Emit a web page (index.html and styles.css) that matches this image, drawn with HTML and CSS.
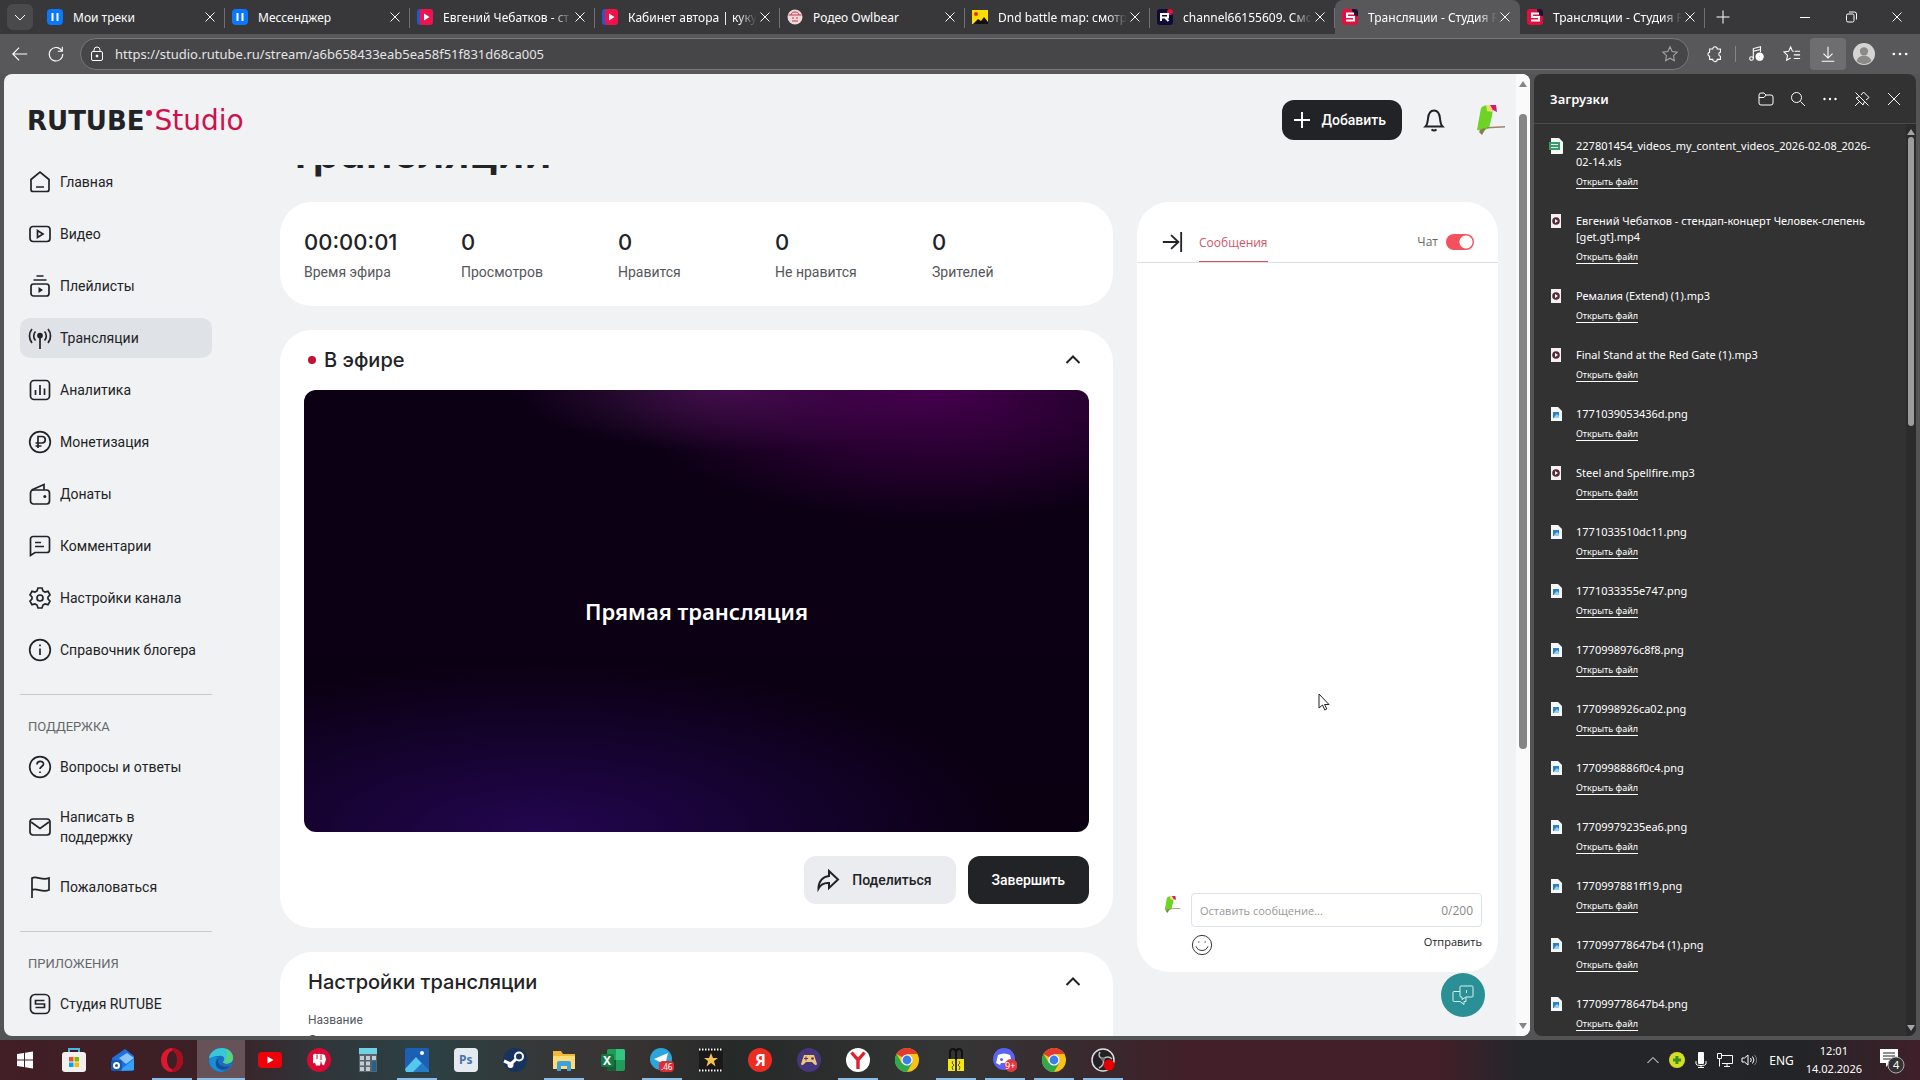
FILE: index.html
```html
<!DOCTYPE html>
<html lang="ru">
<head>
  <meta charset="UTF-8" />
  <meta name="viewport" content="width=device-width, initial-scale=1.0"/>
  <title>Трансляции - Студия RUTUBE</title>
  <link rel="stylesheet" href="styles.css">
</head>
<body>

<!-- shared icons -->
<svg class="sprite" aria-hidden="true">
  <symbol id="x" viewBox="0 0 16 16"><path d="M3.500 3.500l9 9M12.500 3.500l-9 9"/></symbol>
  <symbol id="dots" viewBox="0 0 16 16"><g fill="currentColor" stroke="none"><circle cx="2.500" cy="8" r="1.200"/><circle cx="8" cy="8" r="1.200"/><circle cx="13.500" cy="8" r="1.200"/></g></symbol>
  <symbol id="chev" viewBox="0 0 24 24"><path d="M5.500 15l6.500-6.500 6.500 6.500"/></symbol>
  <symbol id="track" viewBox="0 0 16 16"><rect width="16" height="16" rx="4" fill="#0a77ff" stroke="none"/><path d="M5.500 4v8M10.500 4v8" stroke="#fff" stroke-width="2"/></symbol>
  <symbol id="play" viewBox="0 0 16 16"><rect width="12" height="16" rx="3" fill="#2a55c8" stroke="none"/><rect x="3" width="13" height="16" rx="3" fill="#f0124d" stroke="none"/><path d="M7 4.500v7l5.500-3.500z" fill="#fff" stroke="none"/></symbol>
  <symbol id="studio" viewBox="0 0 16 16"><rect width="16" height="16" rx="3" fill="#e0103f" stroke="none"/><path d="M10 0h3a3 3 0 0 1 3 3v4c-4 0-6-3-6-7z" fill="#1a1230" stroke="none"/><path d="M12 4.500H5v3.500h7v3.500H4" stroke="#fff" stroke-width="2" fill="none"/></symbol>
  <symbol id="chrome" viewBox="0 0 24 24"><g stroke="none"><circle cx="12" cy="12" r="12" fill="#fbc116"/><path d="M12 12L1.600 6A12 12 0 0 1 22.400 6H12z" fill="#e33b2e"/><path d="M1.600 6A12 12 0 0 0 12 24l5.200-9L12 12 6.800 15z" fill="#2da94f"/><circle cx="12" cy="12" r="5.600" fill="#fff"/><circle cx="12" cy="12" r="4.400" fill="#3b7ded"/></g></symbol>
  <symbol id="parrot" viewBox="0 0 32 30"><g stroke="none"><path d="M7 3Q9 0 16 0l3 3-1 8-3 12-6 3-6-1z" fill="#6bd425"/><path d="M7 24l5-1-4 7-3-3z" fill="#8a7a55"/><path d="M12 0h5l2 7-6-1z" fill="#f0dc6a"/><path d="M16 0h6l1 7-4-2z" fill="#d8147c"/><path d="M13 22l18-1v1.500l-18 1z" fill="#9c8266"/></g></symbol>
  <symbol id="xls" viewBox="0 0 14 16"><g stroke="none"><path d="M2 0h8l4 4v11a1 1 0 0 1-1 1H2z" fill="#f4fbf6"/><rect y="4" width="11" height="8" fill="#3b9a6b"/><path d="M2 6.500h7M2 9.500h7" stroke="#dff3e8"/></g></symbol>
  <symbol id="media" viewBox="0 0 14 16"><g stroke="none"><path d="M2 1h10v14H2z" fill="#f6f0f2"/><circle cx="7" cy="8" r="3.800" fill="#542b38"/><path d="M6 6v4l3-2z" fill="#fff"/></g></symbol>
  <symbol id="png" viewBox="0 0 14 16"><g stroke="none"><path d="M2 1h7l4 4v10H2z" fill="#f4f7fb"/><path d="M4 6h6v6H4z" fill="#2a7fd0"/><path d="M5 11l3-3 2 2v2H5z" fill="#8fd0f5"/></g></symbol>
</svg>

<div class="tabs">
  <button class="tab-menu" aria-label="Вкладки"><svg viewBox="0 0 16 16"><path d="M3 6l5 5 5-5"/></svg></button>
  <div class="tab"><svg class="fav"><use href="#track"/></svg><a href="#">Мои треки</a><button aria-label="Закрыть"><svg><use href="#x"/></svg></button></div>
  <div class="tab"><svg class="fav"><use href="#track"/></svg><a href="#">Мессенджер</a><button aria-label="Закрыть"><svg><use href="#x"/></svg></button></div>
  <div class="tab"><svg class="fav"><use href="#play"/></svg><a class="long" href="#">Евгений Чебатков - ст</a><button aria-label="Закрыть"><svg><use href="#x"/></svg></button></div>
  <div class="tab"><svg class="fav"><use href="#play"/></svg><a class="long" href="#">Кабинет автора | куку</a><button aria-label="Закрыть"><svg><use href="#x"/></svg></button></div>
  <div class="tab"><svg class="fav" viewBox="0 0 16 16"><circle cx="8" cy="8" r="7.500" fill="#f3d6d8" stroke="none"/><path d="M1.500 6h13M4 6c0-4 8-4 8 0M5 9h2M9 9h2M5 12h6" stroke="#b4434f" fill="none"/></svg><a href="#">Родео Owlbear</a><button aria-label="Закрыть"><svg><use href="#x"/></svg></button></div>
  <div class="tab"><svg class="fav" viewBox="0 0 16 16"><rect y="1" width="16" height="14" fill="#ffdd00" stroke="none"/><circle cx="4" cy="5" r="2" fill="#e8321e" stroke="none"/><path d="M1 15l5-5 3 2 3-4 4 5v2z" fill="#111" stroke="none"/></svg><a class="long" href="#">Dnd battle map: смотр</a><button aria-label="Закрыть"><svg><use href="#x"/></svg></button></div>
  <div class="tab"><svg class="fav" viewBox="0 0 16 16"><rect width="16" height="16" rx="3" fill="#0d0b3c" stroke="none"/><circle cx="13" cy="3" r="3" fill="#e8103f" stroke="none"/><path d="M4 12V5h7v3.500H4M8.500 9l3 3" stroke="#fff" stroke-width="2" fill="none"/></svg><a class="long" href="#">channel66155609. Смо</a><button aria-label="Закрыть"><svg><use href="#x"/></svg></button></div>
  <div class="tab active"><svg class="fav"><use href="#studio"/></svg><a class="long" href="#">Трансляции - Студия R</a><button aria-label="Закрыть"><svg><use href="#x"/></svg></button></div>
  <div class="tab"><svg class="fav"><use href="#studio"/></svg><a class="long" href="#">Трансляции - Студия R</a><button aria-label="Закрыть"><svg><use href="#x"/></svg></button></div>
  <button class="new-tab" aria-label="Новая вкладка"><svg viewBox="0 0 16 16"><path d="M8 1.500v13M1.500 8h13"/></svg></button>
  <div class="window-buttons">
    <button aria-label="Свернуть"><svg viewBox="0 0 16 16"><path d="M3 8.500h10"/></svg></button>
    <button aria-label="Развернуть"><svg viewBox="0 0 16 16"><rect x="3.500" y="5" width="7.500" height="8" rx="1.500"/><path d="M6 3h5.500a2 2 0 0 1 2 2v5.500"/></svg></button>
    <button aria-label="Закрыть окно"><svg><use href="#x"/></svg></button>
  </div>
</div>

<div class="toolbar">
  <button aria-label="Назад"><svg viewBox="0 0 20 20"><path d="M18 10H2M9 3l-7 7 7 7"/></svg></button>
  <button aria-label="Обновить"><svg viewBox="0 0 20 20"><path d="M16.500 6.500A7.500 7.500 0 1 0 17.500 10M17 2v5h-5"/></svg></button>
  <div class="address">
    <svg viewBox="0 0 16 16"><rect x="2.500" y="5.500" width="11" height="9" rx="1.500"/><path d="M5 5.500V4a3 3 0 0 1 6 0v1.500"/><circle cx="8" cy="10" r="1" fill="currentColor"/></svg>
    <input type="text" aria-label="Адрес" value="https://studio.rutube.ru/stream/a6b658433eab5ea58f51f831d68ca005">
    <button aria-label="В избранное"><svg class="dim" viewBox="0 0 20 20"><path d="M10 2l2.400 5.200 5.600.7-4.100 3.900 1 5.600L10 14.700l-4.900 2.700 1-5.600L2 7.900l5.600-.7z"/></svg></button>
  </div>
  <div class="tools">
    <button aria-label="Расширения"><svg viewBox="0 0 20 20"><path d="M4 4.500h3.500a2.500 2.500 0 0 1 5 0H16V8a2.300 2.300 0 0 0 0 4.500V16h-3.500a2.500 2.500 0 0 1-5 0H4v-3.500A2.300 2.300 0 0 1 4 8z"/></svg></button>
    <span class="sep"></span>
    <button aria-label="Музыка"><svg viewBox="0 0 20 20"><path d="M7 15V4l8-2v6M7 7l8-2"/><circle cx="5" cy="15" r="2"/><circle cx="14" cy="13" r="4" fill="currentColor"/><circle cx="14" cy="13" r="1" fill="#58585b"/></svg></button>
    <button aria-label="Избранное"><svg viewBox="0 0 20 20"><path d="M12 7l-1.600-.2L8.500 2 6.300 7 1 7.700l4 3.800-1 5.500 4.500-2.500M13 7h6M12 11h7M12 15h7"/></svg></button>
    <button class="on" aria-label="Загрузки"><svg viewBox="0 0 20 20"><path d="M10 2v12M5 9.500l5 5 5-5M3 18h14"/></svg></button>
    <button aria-label="Профиль"><svg class="face" viewBox="0 0 24 24"><circle cx="12" cy="12" r="12" fill="#d6d4d2" stroke="none"/><circle cx="12" cy="9" r="4.500" fill="#8c8a88" stroke="none"/><path d="M4 20c1-8 15-8 16 0a12 12 0 0 1-16 0z" fill="#8c8a88" stroke="none"/></svg></button>
    <button aria-label="Ещё"><svg><use href="#dots"/></svg></button>
  </div>
</div>

<div class="work">
  <div class="page">
    <div class="site">
      <header>
        <a class="logo" href="#"><b>RUTUBE</b><i></i><span>Studio</span></a>
        <div class="header-actions">
          <button class="btn dark add"><svg viewBox="0 0 16 16"><path d="M8 0v16M0 8h16"/></svg>Добавить</button>
          <button aria-label="Уведомления"><svg class="bell" viewBox="0 0 24 24"><path d="M3.500 18.500h17c-2-2-2-4-2.500-8-.5-5-3-8-6-8s-5.500 3-6 8c-.5 4-.5 6-2.500 8z"/><path d="M9.500 21.500q2.500 2 5 0"/></svg></button>
          <button aria-label="Профиль"><svg class="me"><use href="#parrot"/></svg></button>
        </div>
      </header>

      <div class="columns">
        <nav class="side">
          <a href="#"><svg viewBox="0 0 24 24"><path d="M3 9.500L12 2l9 7.500v10a2 2 0 0 1-2 2H5a2 2 0 0 1-2-2zM8 17h8"/></svg>Главная</a>
          <a href="#"><svg viewBox="0 0 24 24"><rect x="2" y="4.500" width="20" height="15" rx="3"/><path d="M9.500 8.500v7l5.500-3.500z"/></svg>Видео</a>
          <a href="#"><svg viewBox="0 0 24 24"><rect x="3" y="10" width="18" height="12" rx="2.500"/><path d="M5.500 6h13M8.500 2h7"/><path d="M10.500 13v6l4.500-3z" fill="currentColor" stroke="none"/></svg>Плейлисты</a>
          <a class="current" href="#"><svg viewBox="0 0 24 24"><path d="M12 10v13M7.500 5.500a6.500 6.500 0 0 0 0 9M16.500 5.500a6.500 6.500 0 0 1 0 9M4 3a11 11 0 0 0 0 14M20 3a11 11 0 0 1 0 14"/><circle cx="12" cy="9.500" r="2" fill="currentColor"/></svg>Трансляции</a>
          <a href="#"><svg viewBox="0 0 24 24"><rect x="2.500" y="2.500" width="19" height="19" rx="3.500"/><path d="M7.500 12v5M12 7v10M16.500 10.500V17"/></svg>Аналитика</a>
          <a href="#"><svg viewBox="0 0 24 24"><circle cx="12" cy="12" r="10.300"/><path d="M10 18V6.500h4a3 3 0 0 1 0 6.500H7.500M7.500 16h6"/></svg>Монетизация</a>
          <a href="#"><svg viewBox="0 0 24 24"><rect x="2.500" y="8" width="19" height="14" rx="3"/><path d="M3.500 8L16 2.500V8"/><circle cx="16.800" cy="14.500" r="1.500" fill="currentColor" stroke="none"/></svg>Донаты</a>
          <a href="#"><svg viewBox="0 0 24 24"><path d="M2.500 21.500V5a2.500 2.500 0 0 1 2.500-2.500h14A2.500 2.500 0 0 1 21.500 5v11a2.500 2.500 0 0 1-2.500 2.500H7zM7 8.500h6M7 12.500h9"/></svg>Комментарии</a>
          <a href="#"><svg viewBox="0 0 24 24"><path d="M10 2h4l1 3 2 1 3-.7 2 3.500L20 11v2l2 2.200-2 3.500-3-.7-2 1-1 3h-4l-1-3-2-1-3 .7-2-3.500L4 13v-2L2 8.800l2-3.500L7 6l2-1z"/><circle cx="12" cy="12" r="3"/></svg>Настройки канала</a>
          <a href="#"><svg viewBox="0 0 24 24"><circle cx="12" cy="12" r="10.300"/><path d="M12 10.500V17M12 6.500v1.800"/></svg>Справочник блогера</a>
          <hr>
          <h4>ПОДДЕРЖКА</h4>
          <a href="#"><svg viewBox="0 0 24 24"><circle cx="12" cy="12" r="10.300"/><path d="M9 9.500c0-4 6.500-4 6.500-.5 0 2.500-3.500 2.500-3.500 5M12 16.500v1.500"/></svg>Вопросы и ответы</a>
          <a class="tall" href="#"><svg viewBox="0 0 24 24"><rect x="2" y="4" width="20" height="16" rx="3"/><path d="M3 7l9 6.500L21 7"/></svg><span>Написать в поддержку</span></a>
          <a href="#"><svg viewBox="0 0 24 24"><path d="M4 23V3c5-2.500 10 3 17 0v12c-7 3-12-2.500-17 0"/></svg>Пожаловаться</a>
          <hr>
          <h4>ПРИЛОЖЕНИЯ</h4>
          <a href="#"><svg viewBox="0 0 24 24"><rect x="2.500" y="2.500" width="19" height="19" rx="4.500"/><path d="M16.500 8.500h-9V12h9v3.500h-9"/></svg>Студия RUTUBE</a>
        </nav>

        <main>
          <h1>Трансляции</h1>
          <div class="boards">
            <div class="left">
              <section class="card stats">
                <div><b>00:00:01</b><span>Время эфира</span></div>
                <div><b>0</b><span>Просмотров</span></div>
                <div><b>0</b><span>Нравится</span></div>
                <div><b>0</b><span>Не нравится</span></div>
                <div><b>0</b><span>Зрителей</span></div>
              </section>

              <section class="card live">
                <div class="card-head">
                  <h2><i></i>В эфире</h2>
                  <button aria-label="Свернуть"><svg><use href="#chev"/></svg></button>
                </div>
                <div class="player">Прямая трансляция</div>
                <div class="card-actions">
                  <button class="btn light"><svg viewBox="0 0 24 24"><path d="M13 3l9 8.500-9 8.500v-5C8 14.500 5 16 2.500 20.500 2.500 13 7 8.500 13 8z"/></svg>Поделиться</button>
                  <button class="btn dark">Завершить</button>
                </div>
              </section>

              <section class="card settings">
                <div class="card-head">
                  <h2>Настройки трансляции</h2>
                  <button aria-label="Свернуть"><svg><use href="#chev"/></svg></button>
                </div>
                <label for="name">Название</label>
                <input id="name" type="text" value="Стрим">
              </section>
            </div>

            <section class="card chat">
              <div class="chat-head">
                <button aria-label="Скрыть чат"><svg viewBox="0 0 24 24"><path d="M2 12h17M11 4.500l8 7.500-8 7.500M22 1v22"/></svg></button>
                <a href="#">Сообщения</a>
                <label for="chat-on">Чат</label>
                <input id="chat-on" type="checkbox" checked>
              </div>
              <div class="messages"></div>
              <form class="write">
                <svg class="small-me"><use href="#parrot"/></svg>
                <div class="write-body">
                  <div class="field">
                    <input type="text" aria-label="Сообщение" placeholder="Оставить сообщение...">
                    <span>0/200</span>
                  </div>
                  <div class="write-foot">
                    <button type="button" aria-label="Эмодзи"><svg viewBox="0 0 24 24"><circle cx="12" cy="12" r="10.500"/><path d="M5.500 13.500c2 6 11 6 13 0M8.500 8v1.500M15.500 8v1.500"/></svg></button>
                    <button class="send" type="button">Отправить</button>
                  </div>
                </div>
              </form>
            </section>
          </div>
        </main>
      </div>
      <button class="help" aria-label="Помощь"><svg viewBox="0 0 24 24"><path d="M10 3h11a1 1 0 0 1 1 1v9a1 1 0 0 1-1 1h-6l-4 2.500V14H10a1 1 0 0 1-1-1V4a1 1 0 0 1 1-1zM9 8.500H3a1 1 0 0 0-1 1v8a1 1 0 0 0 1 1h6l4 3v-3h2v-4M15.500 7v3"/></svg></button>
    </div>
    <div class="scroll"><span class="up"></span><span class="thumb"></span><span class="down"></span></div>
  </div>

  <aside class="downloads">
    <div class="dl-head">
      <h3>Загрузки</h3>
      <button aria-label="Папка"><svg viewBox="0 0 16 16"><path d="M1 4a2 2 0 0 1 2-2h3l2 2h5a2 2 0 0 1 2 2v6a2 2 0 0 1-2 2H3a2 2 0 0 1-2-2zM1 6.500h5L8 4"/></svg></button>
      <button aria-label="Поиск"><svg viewBox="0 0 16 16"><circle cx="6.500" cy="6.500" r="5"/><path d="M10.500 10.500L15 15"/></svg></button>
      <button aria-label="Ещё"><svg><use href="#dots"/></svg></button>
      <button aria-label="Открепить"><svg viewBox="0 0 16 16"><path d="M1.500 1.500l13 13M5.500 5.500L2 7l7 7 1.500-3.500M7 4l2.500-3L15 6.500 12 9M5 11l-4 4"/></svg></button>
      <button aria-label="Закрыть"><svg viewBox="0 0 16 16"><path d="M2 2l12 12M14 2L2 14"/></svg></button>
    </div>
    <div class="dl-body">
      <ul>
        <li><svg><use href="#xls"/></svg><div><p>227801454_videos_my_content_videos_2026-02-08_2026-02-14.xls</p><a href="#">Открыть файл</a></div></li>
        <li><svg><use href="#media"/></svg><div><p>Евгений Чебатков - стендап-концерт Человек-слепень [get.gt].mp4</p><a href="#">Открыть файл</a></div></li>
        <li><svg><use href="#media"/></svg><div><p>Ремалия (Extend) (1).mp3</p><a href="#">Открыть файл</a></div></li>
        <li><svg><use href="#media"/></svg><div><p>Final Stand at the Red Gate (1).mp3</p><a href="#">Открыть файл</a></div></li>
        <li><svg><use href="#png"/></svg><div><p>1771039053436d.png</p><a href="#">Открыть файл</a></div></li>
        <li><svg><use href="#media"/></svg><div><p>Steel and Spellfire.mp3</p><a href="#">Открыть файл</a></div></li>
        <li><svg><use href="#png"/></svg><div><p>1771033510dc11.png</p><a href="#">Открыть файл</a></div></li>
        <li><svg><use href="#png"/></svg><div><p>1771033355e747.png</p><a href="#">Открыть файл</a></div></li>
        <li><svg><use href="#png"/></svg><div><p>1770998976c8f8.png</p><a href="#">Открыть файл</a></div></li>
        <li><svg><use href="#png"/></svg><div><p>1770998926ca02.png</p><a href="#">Открыть файл</a></div></li>
        <li><svg><use href="#png"/></svg><div><p>1770998886f0c4.png</p><a href="#">Открыть файл</a></div></li>
        <li><svg><use href="#png"/></svg><div><p>17709979235ea6.png</p><a href="#">Открыть файл</a></div></li>
        <li><svg><use href="#png"/></svg><div><p>1770997881ff19.png</p><a href="#">Открыть файл</a></div></li>
        <li><svg><use href="#png"/></svg><div><p>177099778647b4 (1).png</p><a href="#">Открыть файл</a></div></li>
        <li><svg><use href="#png"/></svg><div><p>177099778647b4.png</p><a href="#">Открыть файл</a></div></li>
      </ul>
      <div class="scroll thin"><span class="up"></span><span class="thumb"></span><span class="down"></span></div>
    </div>
  </aside>
</div>

<div class="taskbar">
  <div class="apps">
    <button aria-label="Пуск"><svg viewBox="0 0 24 24"><path d="M4 6l7-1v6.500H4zM12 4.800L20 3.500v8h-8zM4 12.500h7V19l-7-1zM12 12.500h8v8l-8-1.300z" fill="#fff"/></svg></button>
    <button aria-label="Магазин"><svg viewBox="0 0 24 24"><path d="M7 5V1h10v4" fill="none" stroke="#45b8e0" stroke-width="2"/><rect y="4" width="24" height="20" rx="3" fill="#f2f0ef"/><path d="M7 9h4.500v4.500H7z" fill="#f25022"/><path d="M12.500 9H17v4.500h-4.500z" fill="#7fba00"/><path d="M7 14.500h4.500V19H7z" fill="#00a4ef"/><path d="M12.500 14.500H17V19h-4.500z" fill="#ffb900"/></svg></button>
    <button aria-label="Почта"><svg viewBox="0 0 24 24"><path d="M1 10L14 1l9 7v13a2 2 0 0 1-2 2H4a2 2 0 0 1-2-2z" fill="#1f6fe0"/><path d="M8 10l8-5 7 5-8 6z" fill="#8cc4ff"/><path d="M8 23l15-12v11z" fill="#36a2f5"/><rect y="12" width="11" height="11" rx="2" fill="#1359b8"/><circle cx="5.500" cy="17.500" r="2.500" fill="none" stroke="#fff" stroke-width="2"/></svg></button>
    <button class="run" aria-label="Opera"><svg viewBox="0 0 24 24"><ellipse cx="12" cy="12" rx="11" ry="12" fill="#e0182d"/><path d="M12 0a11 12 0 0 1 0 24z" fill="#a70e1e"/><ellipse cx="12" cy="12" rx="5" ry="9" fill="#3d2026"/></svg></button>
    <button class="run now" aria-label="Edge"><svg viewBox="0 0 24 24"><circle cx="12" cy="12" r="12" fill="#1b6ec2"/><path d="M0 11C1-3 24-4 24 10c0 6-8 7-10 4 3-4 0-7-4-6-5 0-9 2-10 3z" fill="#38c6d9"/><path d="M16 1c6 2 8 6 8 9 0 6-8 7-10 4 5-3 5-9 2-13z" fill="#56d67c"/><path d="M9 9c-5 5-2 14 7 14A12 12 0 0 1 0 12c2-3 6-4 9-3z" fill="#1590d8"/><path d="M10 10c-3 5 2 11 11 8-4 6-15 4-14-3 0-2 1-4 3-5z" fill="#164f95"/></svg></button>
    <button aria-label="YouTube"><svg viewBox="0 0 24 24"><rect y="4" width="24" height="16" rx="4" fill="#f00008"/><path d="M9.500 8.500v7l6-3.500z" fill="#fff"/></svg></button>
    <button aria-label="Кулак"><svg viewBox="0 0 24 24"><circle cx="12" cy="12" r="12" fill="#d80a35"/><path d="M6 7q2-2 4-.5 2-1.500 4 0 2.500-1 4 1l1 4-2 6-2-1-1-4-1 5H9l-1-3-2 1z" fill="#fff"/><path d="M10 7v4M14 7v5" stroke="#d80a35"/></svg></button>
    <button aria-label="Калькулятор"><svg viewBox="0 0 24 24"><rect x="3" width="18" height="24" fill="#59646d"/><path d="M3 0h18v6H3z" fill="#6fd3e5"/><path d="M4 8h4v4H4zM10 8h4v4h-4zM16 8h4v4h-4zM4 13.500h4v4H4zM10 13.500h4v4h-4zM4 19h4v4H4zM10 19h4v4h-4z" fill="#c2ccd4"/><path d="M16 13.500h4V23h-4z" fill="#24618f"/></svg></button>
    <button class="run" aria-label="Фото"><svg viewBox="0 0 24 24"><rect width="24" height="24" rx="2" fill="#1c5fb5"/><path d="M0 21L11 9l13 14-2 1H1z" fill="#55c7ee"/><path d="M8 24l9-9 7 7v2z" fill="#257bc6"/><circle cx="17" cy="5" r="2" fill="#fff"/></svg></button>
    <button aria-label="Photoshop"><svg viewBox="0 0 24 24"><rect width="24" height="24" rx="4" fill="#e4eaf0"/><text x="5" y="16" font-size="12" font-weight="bold" fill="#4774ad">Ps</text></svg></button>
    <button aria-label="Steam"><svg viewBox="0 0 24 24"><circle cx="12" cy="12" r="12" fill="#16345e"/><path d="M1 13l7 3 6-6M6 17l4-3" stroke="#fff" stroke-width="3" fill="none"/><circle cx="16" cy="8.500" r="4" fill="#16345e" stroke="#fff" stroke-width="2"/><circle cx="7.500" cy="17" r="3" fill="#fff"/></svg></button>
    <button class="run" aria-label="Проводник"><svg viewBox="0 0 24 24"><path d="M1 3h8l2 3h12v15H1z" fill="#f2b83a"/><path d="M1 8h22v13H1z" fill="#ffdc75"/><path d="M5 23v-8q0-2 2-2h10q2 0 2 2v8h-4v-5H9v5z" fill="#3fa0dc"/></svg></button>
    <button aria-label="Excel"><svg viewBox="0 0 24 24"><rect x="6" y="1" width="18" height="22" rx="2" fill="#1f9d59"/><path d="M15 1h7a2 2 0 0 1 2 2v9h-9z" fill="#33c481"/><path d="M6 12h9v11H8a2 2 0 0 1-2-2z" fill="#155c37"/><rect y="6" width="13" height="13" rx="2" fill="#107c41"/><text x="2" y="17" font-size="12" font-weight="bold" fill="#fff">X</text></svg></button>
    <button class="run" aria-label="Telegram"><svg viewBox="0 0 24 24"><circle cx="11" cy="11" r="11" fill="#2ba5da"/><path d="M4 11l14-6-3 12-5-3z" fill="#fff"/><rect x="9" y="13" width="15" height="11" rx="4" fill="#dd2c33"/><text x="11" y="22" font-size="8" fill="#fff">.46</text></svg></button>
    <button aria-label="Кино"><svg viewBox="0 0 24 24"><rect width="24" height="24" fill="#191919"/><path d="M0 1.500h24M0 22.500h24" stroke="#fff" stroke-width="2" stroke-dasharray="1.500 1.500"/><path d="M12 5l2 5h5l-4 3 1.500 5.500L12 15l-4.500 3.500L9 13l-4-3h5z" fill="#f1c24d"/></svg></button>
    <button aria-label="Яндекс"><svg viewBox="0 0 24 24"><circle cx="12" cy="12" r="12" fill="#ec2b22"/><text x="7" y="18" font-size="16" font-weight="bold" fill="#fff">Я</text></svg></button>
    <button aria-label="Игры"><svg viewBox="0 0 24 24"><circle cx="12" cy="12" r="12" fill="#46367c"/><path d="M7 7h10l3 9q-1 3-5-2H9q-4 5-5 2z" fill="#efc777"/><path d="M7 10.500h4M9 8.500v4" stroke="#46367c"/><circle cx="15.500" cy="10.500" r="1.300" fill="#46367c"/></svg></button>
    <button class="run" aria-label="Яндекс Браузер"><svg viewBox="0 0 24 24"><circle cx="12" cy="12" r="12" fill="#fff"/><path d="M5.500 4.500L12 12v9M18.500 4.500L12 12" fill="none" stroke="#e02130" stroke-width="3.400"/></svg></button>
    <button aria-label="Chrome"><svg><use href="#chrome"/></svg></button>
    <button class="run" aria-label="Замок"><svg viewBox="0 0 24 24"><path d="M6 12V5q0-4 3-4t3 4v7M12 12V5q0-4 3-4t3 4v7" fill="none" stroke="#111" stroke-width="2"/><path d="M4 11h7v12H4zM13 11h7v12h-7z" fill="#f6e70d"/><path d="M9 13l-1 2 2 2-2 2 1 3M15 13l1 2-2 2 2 2-1 3" fill="none" stroke="#5c5608"/></svg></button>
    <button class="run" aria-label="Discord"><svg viewBox="0 0 24 24"><circle cx="11" cy="11" r="11" fill="#5865f2"/><path d="M5 7q6-3 12 0l2 8-4 2-1-2H8l-1 2-4-2z" fill="#fff"/><circle cx="8.500" cy="11.500" r="1.500" fill="#5865f2"/><circle cx="18" cy="17.500" r="6.500" fill="#e03a45"/><text x="12" y="21" font-size="9" fill="#fff">9+</text></svg></button>
    <button class="run" aria-label="Chrome"><svg><use href="#chrome"/></svg></button>
    <button class="run" aria-label="OBS"><svg viewBox="0 0 24 24"><circle cx="12" cy="12" r="11" fill="#232126" stroke="#ddd" stroke-width="1.500"/><path d="M12 11Q6 9 9 4M12 11q5-4 9 0M12 11q2 6-4 9" fill="none" stroke="#bbb" stroke-width="1.500"/><circle cx="12" cy="11" r="2" fill="#77747a"/><circle cx="18" cy="17" r="5.500" fill="#e80000"/></svg></button>
  </div>
  <div class="tray">
    <svg viewBox="0 0 16 16"><path d="M2.500 11L8 5.500l5.500 5.500"/></svg>
    <svg viewBox="0 0 16 16"><circle cx="8" cy="8" r="8" fill="#d5de22" stroke="none"/><path d="M8 4v8M4 8h8" stroke="#3b8f1e" stroke-width="3"/></svg>
    <svg viewBox="0 0 16 16"><rect x="5" width="6" height="12" rx="1" fill="#fff" stroke="none"/><path d="M3 9v3q0 1.500 5 1.500t5-1.500V9M8 13.500v2M5 15.500h6"/></svg>
    <svg viewBox="0 0 16 16"><path d="M5 3.500h10.500v8H5M.5 1.500h4v5h-4zM2.500 6.500v8M10 11.500v3M7 14.500h6"/></svg>
    <svg viewBox="0 0 16 16"><path d="M1 6v4h2.500L7 13V3L3.500 6zM9.500 6q1.500 2 0 4M11.500 4.500q3 3.500 0 7"/><path d="M13.500 3q4.500 5 0 10" opacity=".4"/></svg>
    <span class="lang">ENG</span>
    <time>12:01<br>14.02.2026</time>
    <svg class="notes" viewBox="0 0 28 28"><path d="M2 3h18v14h-8l-4 4v-4H2z" fill="#fff" stroke="none"/><path d="M5 7h12M5 10h12M5 13h8" stroke="#222"/><circle cx="18" cy="19" r="8" fill="#333" stroke="#aaa"/><text x="15" y="23" font-size="11" fill="#fff" stroke="none">4</text></svg>
  </div>
</div>

<svg class="cursor" viewBox="0 0 12 18"><path d="M1 1v14l3.500-3 2.300 5 2-1-2.200-4.500H11z" fill="#fff" stroke="#222"/></svg>

</body>
</html>
```
FILE: styles.css
```css
* {
  box-sizing: border-box;
}

body {
  margin: 0;
  height: 100vh;
  display: flex;
  flex-direction: column;
  overflow: hidden;
  background: #545456;
  color: #222326;
  font-family: "Noto Sans", sans-serif;
  font-size: 12px;
}

button {
  display: flex;
  align-items: center;
  justify-content: center;
  padding: 0;
  border: none;
  background: none;
  color: inherit;
  font: inherit;
}

a {
  color: inherit;
  text-decoration: none;
}

h1, h2, h3, h4, p, ul {
  margin: 0;
  padding: 0;
}

svg {
  flex: none;
  width: 16px;
  height: 16px;
  fill: none;
  stroke: currentColor;
}

.sprite {
  display: none;
}

/* browser tabs */
.tabs {
  display: flex;
  height: 34px;
  padding-left: 7px;
  background: #38383a;
  color: #fff;
}

.tab-menu {
  width: 26px;
  height: 26px;
  margin: 4px 7px 0 0;
  border-radius: 6px;
  background: #4a4a4c;
}

.tab {
  display: flex;
  align-items: center;
  flex: 0 1 185px;
  min-width: 0;
  height: 34px;
  padding: 0 7px;
  background: linear-gradient(#707072, #707072) right 8px / 1px 20px no-repeat;
}

.tab.active {
  background: #58585b;
  border-radius: 8px 8px 0 0;
}

.tab a {
  flex: 1;
  min-width: 0;
  margin-left: 10px;
  overflow: hidden;
  white-space: nowrap;
}

.tab .long {
  -webkit-mask-image: linear-gradient(to right, #000 85%, transparent);
  mask-image: linear-gradient(to right, #000 85%, transparent);
}

.new-tab {
  width: 36px;
}

.window-buttons {
  display: flex;
  margin-left: auto;
}

.window-buttons button {
  width: 46px;
}

/* address row */
.toolbar {
  display: flex;
  align-items: center;
  height: 40px;
  padding: 0 2px;
  background: #58585b;
  color: #fff;
}

.toolbar button {
  width: 36px;
  height: 32px;
}

.toolbar button svg {
  width: 18px;
  height: 18px;
  stroke-width: 1.2;
}

.address {
  display: flex;
  align-items: center;
  flex: 1;
  height: 32px;
  margin-left: 6px;
  padding-left: 8px;
  border: 1px solid #77787a;
  border-radius: 16px;
  background: #464649;
}

.address input {
  flex: 1;
  margin-left: 8px;
  padding: 0 2px;
  border: none;
  background: none;
  color: #e4e4e4;
  font: inherit;
  font-size: 13px;
}

.toolbar .dim {
  color: #a5a5a5;
}

.tools {
  display: flex;
  align-items: center;
  margin-left: 8px;
}

.tools .sep {
  width: 1px;
  height: 16px;
  margin: 0 2px;
  background: #858587;
}

.tools .on {
  border-radius: 4px;
  background: #6e6e70;
}

.toolbar .face {
  width: 22px;
  height: 22px;
}

/* page and side panel */
.work {
  display: flex;
  flex: 1;
  min-height: 0;
  gap: 4px;
  padding: 0 4px 4px;
}

.page {
  display: flex;
  flex: 1;
  min-width: 0;
  overflow: hidden;
  border-radius: 8px;
  background: #f1f2f4;
}

.site {
  position: relative;
  display: flex;
  flex-direction: column;
  flex: 1;
  min-width: 0;
  font-family: Roboto, sans-serif;
  font-size: 14px;
}

header {
  display: flex;
  align-items: center;
  justify-content: space-between;
  flex: none;
  height: 91px;
  padding: 0 10px 0 23px;
}

.logo {
  display: flex;
  align-items: center;
  padding-top: 2px;
  font-family: "DejaVu Sans", sans-serif;
  font-size: 28px;
  line-height: 28px;
  color: #d0104c;
}

.logo b {
  font-size: 26px;
  color: #222326;
}

.logo i {
  width: 6px;
  height: 6px;
  margin: 0 3px 16px 1px;
  border-radius: 50%;
  background: #d0104c;
}

.header-actions {
  display: flex;
  gap: 16px;
  align-items: center;
}

.btn {
  height: 48px;
  padding: 0 24px;
  border-radius: 12px;
  font-weight: 500;
  font-size: 14px;
}

.btn svg {
  stroke-width: 2;
}

.dark {
  background: #222326;
  color: #fff;
}

.light {
  padding: 0 24px 0 12px;
  gap: 12px;
  background: #ebecef;
}

.light svg {
  width: 24px;
  height: 24px;
}

.add {
  height: 40px;
  padding: 0 16px 0 12px;
  gap: 12px;
  margin-right: 4px;
}

.bell {
  width: 24px;
  height: 24px;
  stroke-width: 2;
}

.me {
  width: 32px;
  height: 30px;
  margin-left: 12px;
}

.columns {
  display: flex;
  flex: 1;
  min-height: 0;
  overflow: hidden;
}

/* site menu */
.side {
  flex: none;
  width: 192px;
  margin: -3px 68px 0 16px;
}

.side a {
  display: flex;
  align-items: center;
  height: 40px;
  margin-bottom: 12px;
  padding: 0 8px;
  gap: 8px;
  border-radius: 10px;
  line-height: 20px;
}

.side .tall {
  height: 56px;
}

.side .tall span {
  width: 90px;
}

.side svg {
  width: 24px;
  height: 24px;
  stroke-width: 1.7;
}

.side .current {
  background: #dfe2e6;
}

.side hr {
  margin: 24px 0;
  border: none;
  border-top: 1px solid #c8cacd;
}

.side h4 {
  margin: 0 8px 12px;
  font-size: 13px;
  line-height: 16px;
  font-weight: normal;
  color: #66686c;
}

/* content */
main {
  flex: 1;
  min-width: 0;
  padding-right: 18px;
}

h1 {
  margin: -38px 0 25px;
  padding-left: 6px;
  font-family: Inter, sans-serif;
  font-size: 44px;
  line-height: 50px;
  font-weight: 600;
}

.boards {
  display: flex;
  align-items: flex-start;
  gap: 24px;
}

.left {
  flex: 1;
  min-width: 0;
}

.card {
  margin-bottom: 24px;
  padding: 24px;
  border-radius: 32px;
  background: #fff;
}

.stats {
  display: grid;
  grid-template-columns: repeat(5, 1fr);
}

.stats b {
  display: block;
  margin-bottom: 4px;
  font-family: Inter, sans-serif;
  font-size: 22px;
  line-height: 32px;
  font-weight: 500;
}

.stats span {
  line-height: 20px;
  color: #55575b;
}

.card-head {
  display: flex;
  align-items: center;
  justify-content: space-between;
  height: 28px;
  margin: -8px 4px 16px;
}

h2 {
  display: flex;
  align-items: center;
  gap: 8px;
  font-family: Inter, sans-serif;
  font-size: 20px;
  font-weight: 500;
}

h2 i {
  width: 8px;
  height: 8px;
  border-radius: 50%;
  background: #c8102e;
}

.card-head svg {
  width: 24px;
  height: 24px;
  stroke-width: 2;
}

.player {
  display: flex;
  align-items: center;
  justify-content: center;
  aspect-ratio: 16 / 9;
  border-radius: 12px;
  background:
    radial-gradient(ellipse 40% 30% at 80% 0, #45004d, transparent),
    radial-gradient(ellipse 28% 14% at 55% 0, #40144a, transparent),
    radial-gradient(ellipse 60% 38% at 30% 100%, #22064f, transparent),
    linear-gradient(#0c0015, #0a0012);
  color: #fff;
  font-family: "Noto Sans", sans-serif;
  font-size: 22px;
  font-weight: 600;
}

.card-actions {
  display: flex;
  justify-content: flex-end;
  gap: 12px;
  margin-top: 24px;
}

.settings label,
.settings input {
  display: block;
  margin: 0 4px;
  font-size: 12px;
  line-height: 16px;
  color: #55575b;
}

.settings input {
  margin-top: 4px;
  padding: 0;
  border: none;
}

/* chat */
.chat {
  display: flex;
  flex-direction: column;
  width: 361px;
  height: calc(100vh - 310px);
  padding: 0;
  font-family: "Open Sans", sans-serif;
  font-size: 12px;
}

.chat-head {
  display: flex;
  align-items: flex-end;
  height: 61px;
  padding: 0 24px;
  border-bottom: 1px solid #dcdee2;
}

.chat-head svg {
  width: 22px;
  height: 22px;
  margin-bottom: 9px;
  stroke-width: 2;
}

.chat-head a {
  margin: 0 auto 0 16px;
  height: 28px;
  border-bottom: 1px solid #d25565;
  color: #d25565;
  line-height: 18px;
}

.chat-head label {
  margin: 0 8px 12px 0;
  color: #666;
}

.chat-head input {
  appearance: none;
  width: 28px;
  height: 16px;
  margin: 0 0 12px;
  border-radius: 8px;
  background: radial-gradient(circle at 20px 8px, #fff 6px, #f4515f 7px);
}

.messages {
  flex: 1;
}

.write {
  display: flex;
  padding: 0 16px 16px 26px;
  gap: 10px;
}

.small-me {
  width: 18px;
  height: 17px;
  margin-top: 3px;
}

.write-body {
  flex: 1;
}

.field {
  display: flex;
  align-items: center;
  height: 34px;
  padding: 0 8px;
  border: 1px solid #dde1ea;
  border-radius: 4px;
  color: #888;
}

.field input {
  flex: 1;
  min-width: 0;
  padding: 0;
  border: none;
  font: inherit;
  font-size: 11px;
}

.field input::placeholder {
  color: #999;
}

.write-foot {
  display: flex;
  justify-content: space-between;
  align-items: flex-start;
  padding-top: 7px;
}

.write-foot svg {
  width: 22px;
  height: 22px;
}

.send {
  font-size: 11px;
  font-weight: 500;
}

.help {
  position: absolute;
  right: 31px;
  bottom: 19px;
  width: 44px;
  height: 44px;
  border-radius: 50%;
  background: #2b8f96;
  color: #d5f2f3;
}

.help svg {
  width: 24px;
  height: 24px;
}

/* scroll bars */
.scroll {
  display: flex;
  flex-direction: column;
  align-items: center;
  flex: none;
  width: 14px;
  padding: 7px 0;
  background: #fafafa;
  color: #858585;
}

.scroll .thumb {
  width: 8px;
  height: 67%;
  margin-top: 27px;
  border-radius: 4px;
  background: #858585;
}

.scroll .up,
.scroll .down {
  border: 4px solid transparent;
}

.scroll .up {
  border-top: none;
  border-bottom: 6px solid currentColor;
}

.scroll .down {
  margin-top: auto;
  border-bottom: none;
  border-top: 6px solid currentColor;
}

.thin {
  width: 10px;
  padding: 5px 0;
  background: #2b2b2b;
  color: #a5a5a5;
}

.thin .thumb {
  width: 6px;
  height: 32%;
  margin-top: 2px;
  background: #9c9c9c;
}

/* downloads */
.downloads {
  display: flex;
  flex-direction: column;
  flex: none;
  width: 382px;
  overflow: hidden;
  border-radius: 8px;
  background: #323232;
  color: #fff;
}

.dl-head {
  display: flex;
  align-items: center;
  flex: none;
  height: 50px;
  padding: 0 14px 0 16px;
  gap: 16px;
  border-bottom: 1px solid #4a4a4a;
}

.dl-head h3 {
  margin-right: auto;
  font-size: 13px;
  font-weight: 600;
}

.dl-body {
  display: flex;
  flex: 1;
  min-height: 0;
}

.dl-body ul {
  flex: 1;
  padding: 7px 20px 0 14px;
  overflow: hidden;
  list-style: none;
}

.dl-body li {
  display: flex;
  padding: 7px 0 15px;
  gap: 12px;
  font-size: 11px;
  line-height: 16px;
}

.dl-body li p {
  overflow-wrap: anywhere;
}

.dl-body li a {
  display: block;
  width: fit-content;
  margin: 6px 0 2px;
  border-bottom: 1px solid #fff;
  font-size: 9px;
  line-height: 12px;
}

/* taskbar */
.taskbar {
  display: flex;
  justify-content: space-between;
  height: 40px;
  background: linear-gradient(to right, #421e26 0, #3b2025 11%, #30363a 17%, #2c4144 22%, #33393a 27%, #3a3434 32%, #252928 38%, #353536 50%, #38292e 57%, #421f29 62%, #421f29 75%, #25262a 79%, #232427 94%, #40202a 100%);
  color: #fff;
}

.apps {
  display: flex;
  gap: 1px;
  padding-left: 1px;
}

.apps button {
  width: 48px;
}

.apps svg {
  width: 24px;
  height: 24px;
  stroke: none;
}

.apps .run {
  background: linear-gradient(#8abde8, #8abde8) center bottom / 40px 2px no-repeat;
}

.apps .now {
  background: linear-gradient(#8abde8, #8abde8) center bottom / 48px 2px no-repeat #68525a;
}

.tray {
  display: flex;
  align-items: center;
  padding-right: 14px;
  gap: 8px;
}

.lang {
  margin: 0 4px;
}

.tray time {
  text-align: center;
  font-size: 11px;
  line-height: 18px;
}

.tray .notes {
  width: 28px;
  height: 28px;
  margin-left: 8px;
}

/* mouse pointer */
.cursor {
  position: absolute;
  left: 1318px;
  top: 693px;
  width: 12px;
  height: 18px;
}
```
